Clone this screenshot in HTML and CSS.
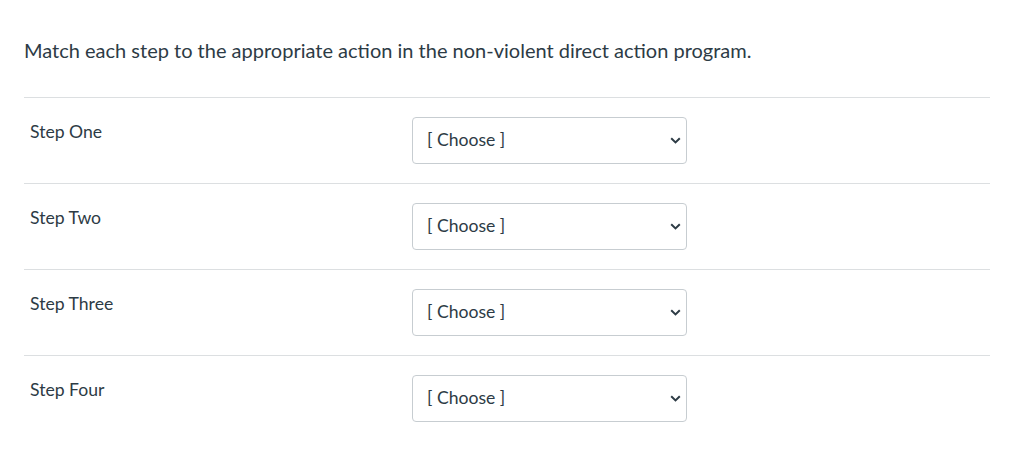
FILE: index.html
```html
<!DOCTYPE html>
<html>
<head>
<meta charset="utf-8">
<link rel="stylesheet" href="styles.css">
</head>
<body>
<div class="question">
  <p class="prompt">Match each step to the appropriate action in the non-violent direct action program.</p>
  <div class="answers">
    <div class="row">
      <div class="label">Step One</div>
      <div class="select"><span class="choose">[ Choose ]</span><svg class="chev" width="11" height="7" viewBox="0 0 11 7"><path d="M1.2 1.2 L5.5 5.4 L9.8 1.2" fill="none" stroke="#2d3b45" stroke-width="2"/></svg></div>
    </div>
    <div class="row">
      <div class="label">Step Two</div>
      <div class="select"><span class="choose">[ Choose ]</span><svg class="chev" width="11" height="7" viewBox="0 0 11 7"><path d="M1.2 1.2 L5.5 5.4 L9.8 1.2" fill="none" stroke="#2d3b45" stroke-width="2"/></svg></div>
    </div>
    <div class="row">
      <div class="label">Step Three</div>
      <div class="select"><span class="choose">[ Choose ]</span><svg class="chev" width="11" height="7" viewBox="0 0 11 7"><path d="M1.2 1.2 L5.5 5.4 L9.8 1.2" fill="none" stroke="#2d3b45" stroke-width="2"/></svg></div>
    </div>
    <div class="row">
      <div class="label">Step Four</div>
      <div class="select"><span class="choose">[ Choose ]</span><svg class="chev" width="11" height="7" viewBox="0 0 11 7"><path d="M1.2 1.2 L5.5 5.4 L9.8 1.2" fill="none" stroke="#2d3b45" stroke-width="2"/></svg></div>
    </div>
  </div>
</div>
</body>
</html>
```
FILE: styles.css
```css
html, body {
  margin: 0;
  padding: 0;
  background: #ffffff;
}
body {
  font-family: Lato, "Liberation Sans", sans-serif;
  color: #2d3b45;
}
.question {
  padding: 35px 25px 0 24px;
}
.prompt {
  margin: 0;
  font-size: 20px;
  line-height: 30px;
  height: 30px;
  padding-bottom: 32px;
}
.row {
  border-top: 1px solid #dcdfe1;
  height: 85px;
  display: flex;
  align-items: flex-start;
}
.label {
  width: 382px;
  padding-left: 6px;
  padding-top: 22px;
  font-size: 17.6px;
  line-height: 24px;
}
.select {
  margin-top: 19px;
  box-sizing: border-box;
  width: 275px;
  height: 47px;
  border: 1px solid #c7cdd1;
  border-radius: 4px;
  display: flex;
  align-items: center;
  justify-content: space-between;
  padding: 0 5px 0 14px;
  font-size: 17.6px;
}
.choose {
  color: #2d3b45;
  line-height: 21px;
  margin-bottom: 2px;
}
.chev {
  display: block;
}
```
